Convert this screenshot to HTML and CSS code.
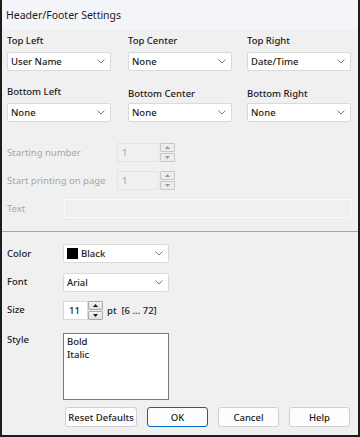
FILE: index.html
```html
<!DOCTYPE html>
<html>
<head>
<meta charset="utf-8">
<link rel="stylesheet" href="styles.css">
</head>
<body>
<div class="dialog">
  <div class="titlebar">Header/Footer Settings</div>
  <div class="top">
    <div class="grid3">
      <div class="cell"><div class="lbl">Top Left</div><div class="select"><span>User Name</span><svg class="chev" width="8" height="5" viewBox="0 0 8 5"><path d="M0.5 0.5 L4 4 L7.5 0.5" fill="none" stroke="#7a7a7a" stroke-width="1"/></svg></div></div>
      <div class="cell"><div class="lbl">Top Center</div><div class="select"><span>None</span><svg class="chev" width="8" height="5" viewBox="0 0 8 5"><path d="M0.5 0.5 L4 4 L7.5 0.5" fill="none" stroke="#7a7a7a" stroke-width="1"/></svg></div></div>
      <div class="cell"><div class="lbl">Top Right</div><div class="select"><span>Date/Time</span><svg class="chev" width="8" height="5" viewBox="0 0 8 5"><path d="M0.5 0.5 L4 4 L7.5 0.5" fill="none" stroke="#7a7a7a" stroke-width="1"/></svg></div></div>
      <div class="cell"><div class="lbl">Bottom Left</div><div class="select"><span>None</span><svg class="chev" width="8" height="5" viewBox="0 0 8 5"><path d="M0.5 0.5 L4 4 L7.5 0.5" fill="none" stroke="#7a7a7a" stroke-width="1"/></svg></div></div>
      <div class="cell low"><div class="lbl">Bottom Center</div><div class="select"><span>None</span><svg class="chev" width="8" height="5" viewBox="0 0 8 5"><path d="M0.5 0.5 L4 4 L7.5 0.5" fill="none" stroke="#7a7a7a" stroke-width="1"/></svg></div></div>
      <div class="cell low"><div class="lbl">Bottom Right</div><div class="select"><span>None</span><svg class="chev" width="8" height="5" viewBox="0 0 8 5"><path d="M0.5 0.5 L4 4 L7.5 0.5" fill="none" stroke="#7a7a7a" stroke-width="1"/></svg></div></div>
    </div>
    <div class="numbers">
      <div class="nrow">
        <div class="dlbl wide">Starting number</div>
        <div class="dinput">1</div>
        <div class="spin dis"><div class="sb"><svg width="5" height="3" viewBox="0 0 5 3"><path d="M0 3 L2.5 0 L5 3Z" fill="#9a9a9a"/></svg></div><div class="sb"><svg width="5" height="3" viewBox="0 0 5 3"><path d="M0 0 L2.5 3 L5 0Z" fill="#9a9a9a"/></svg></div></div>
      </div>
      <div class="nrow">
        <div class="dlbl wide">Start printing on page</div>
        <div class="dinput">1</div>
        <div class="spin dis"><div class="sb"><svg width="5" height="3" viewBox="0 0 5 3"><path d="M0 3 L2.5 0 L5 3Z" fill="#9a9a9a"/></svg></div><div class="sb"><svg width="5" height="3" viewBox="0 0 5 3"><path d="M0 0 L2.5 3 L5 0Z" fill="#9a9a9a"/></svg></div></div>
      </div>
      <div class="nrow">
        <div class="dlbl narrow">Text</div>
        <div class="dtext"></div>
      </div>
    </div>
  </div>
  <div class="sep"></div>
  <div class="bottom">
    <div class="props">
      <div class="plbl">Color</div>
      <div class="select mid"><span class="swatch"></span><span>Black</span><svg class="chev" width="8" height="5" viewBox="0 0 8 5"><path d="M0.5 0.5 L4 4 L7.5 0.5" fill="none" stroke="#7a7a7a" stroke-width="1"/></svg></div>
      <div class="plbl">Font</div>
      <div class="select mid"><span>Arial</span><svg class="chev" width="8" height="5" viewBox="0 0 8 5"><path d="M0.5 0.5 L4 4 L7.5 0.5" fill="none" stroke="#7a7a7a" stroke-width="1"/></svg></div>
      <div class="plbl">Size</div>
      <div class="sizerow">
        <div class="sinput">11</div>
        <div class="spin"><div class="sb"><svg width="5" height="3" viewBox="0 0 5 3"><path d="M0 3 L2.5 0 L5 3Z" fill="#1a1a1a"/></svg></div><div class="sb"><svg width="5" height="3" viewBox="0 0 5 3"><path d="M0 0 L2.5 3 L5 0Z" fill="#1a1a1a"/></svg></div></div>
        <span class="range">pt&nbsp;&nbsp;[6 ... 72]</span>
      </div>
      <div class="plbl top-al">Style</div>
      <div class="listbox"><div>Bold</div><div>Italic</div></div>
    </div>
    <div class="buttons">
      <div class="btn reset">Reset Defaults</div>
      <div class="btn ok">OK</div>
      <div class="btn">Cancel</div>
      <div class="btn">Help</div>
    </div>
  </div>
</div>
</body>
</html>
```
FILE: styles.css
```css
html, body { margin: 0; padding: 0; }
body { width: 360px; height: 437px; background: #ffffff; font-family: "Noto Sans", "DejaVu Sans", sans-serif; }
.dialog {
  box-sizing: border-box; width: 360px; height: 437px;
  border: 2px solid #1c1c1c; border-top: 0;
  background: #f0f0f0; display: flex; flex-direction: column;
  color: #1a1a1a;
}
.titlebar {
  height: 30px; background: #f3f5f9; font-size: 10.5px; color: #1a1a1a;
  display: flex; align-items: center; padding-left: 4px;
}
.top { padding: 4px 0 0 5px; }
.grid3 {
  display: grid; grid-template-columns: 121px 119px 104px; row-gap: 14px;
}
.lbl { font-size: 9.5px; font-weight: 500; line-height: 14px; height: 14px; white-space: nowrap; }
.cell .select { margin-top: 4px; }
.cell.low .lbl { padding-top: 2px; }
.cell.low .select { margin-top: 2px; }
.select {
  box-sizing: border-box; height: 19px; width: 104px; background: #ffffff;
  border: 1px solid #dadada; border-radius: 2px;
  display: flex; align-items: center; padding-left: 3px;
  font-size: 9.5px; font-weight: 500; white-space: nowrap;
}
.chev { margin-left: auto; margin-right: 5px; }
.numbers { margin-top: 21px; display: flex; flex-direction: column; gap: 9px; }
.nrow { display: flex; align-items: center; height: 19px; }
.dlbl { font-size: 9.5px; color: #a6a6a6; white-space: nowrap; }
.dlbl.wide { width: 110px; }
.dlbl.narrow { width: 57px; }
.dinput {
  box-sizing: border-box; width: 42px; height: 19px; border: 1px solid #e4e4e4;
  background: #f0f0f0; font-size: 9.5px; color: #a0a0a0; padding-left: 4px;
  display: flex; align-items: center;
}
.dtext {
  box-sizing: border-box; width: 287px; height: 19px; border: 1px solid #fbfbfb;
  background: #f0f0f0;
}
.spin { display: flex; flex-direction: column; width: 15px; height: 19px; margin-left: 1px; gap: 1px; }
.sb {
  box-sizing: border-box; flex: 1; border: 1px solid #a9a9a9; border-radius: 1px;
  background: linear-gradient(#f4f4f4, #dedede); display: flex; align-items: center; justify-content: center;
}
.spin.dis .sb { border-color: #c8c8c8; background: #ececec; }
.sep { height: 1px; background: #a6a6a6; margin-top: 13px; }
.bottom { padding: 12px 0 0 5px; }
.props {
  display: grid; grid-template-columns: 56px 106px; grid-template-rows: 19px 18px 18px 67px;
  row-gap: 10px; align-items: center;
}
.props .listbox { margin-top: 4px; }
.plbl { font-size: 9.5px; font-weight: 500; line-height: 14px; }
.plbl.top-al { align-self: start; margin-top: 4px; }
.select.mid { width: 106px; height: 19px; }
.swatch { width: 11px; height: 11px; background: #000; margin-right: 3px; }
.sizerow { display: flex; align-items: center; height: 19px; }
.sinput {
  box-sizing: border-box; width: 25px; height: 19px; background: #fff; border: 1px solid #dadada;
  font-size: 9.5px; font-weight: 500; padding-left: 5px; display: flex; align-items: center;
}
.sizerow .spin { margin-left: 0; }
.range { font-size: 9.5px; font-weight: 500; margin-left: 4px; white-space: nowrap; }
.listbox {
  box-sizing: border-box; width: 106px; height: 67px; background: #fff; border: 1px solid #7a7a7a;
  padding: 1px 3px; font-size: 9.5px; font-weight: 500; line-height: 13px; align-self: start;
}
.buttons { display: flex; gap: 10px; margin-top: 11px; padding-left: 58px; }
.btn {
  box-sizing: border-box; height: 20px; width: 61px; background: #fdfdfd;
  border: 1px solid #d0d0d0; border-radius: 3px; font-size: 9.5px; font-weight: 500;
  display: flex; align-items: center; justify-content: center; white-space: nowrap;
}
.btn.reset { width: 72px; }
.btn.ok { border-color: #0067c0; }
```
